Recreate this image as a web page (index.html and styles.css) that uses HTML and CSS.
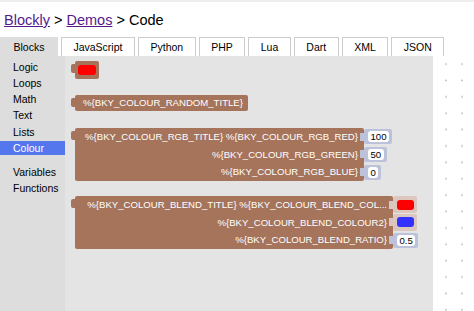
FILE: index.html
```html
<!DOCTYPE html>
<html>
<head>
<meta charset="utf-8">
<link rel="stylesheet" href="styles.css">
</head>
<body>
<div class="topstrip"></div>
<h1 class="title"><a href="#">Blockly</a> &gt; <a href="#">Demos</a> &gt; Code</h1>
<div class="tabs">
  <div class="tab sel">Blocks</div>
  <div class="tab">JavaScript</div>
  <div class="tab">Python</div>
  <div class="tab">PHP</div>
  <div class="tab">Lua</div>
  <div class="tab">Dart</div>
  <div class="tab">XML</div>
  <div class="tab">JSON</div>
</div>
<div class="ws">
  <div class="toolbox">
    <div class="cat">Logic</div>
    <div class="cat">Loops</div>
    <div class="cat">Math</div>
    <div class="cat">Text</div>
    <div class="cat">Lists</div>
    <div class="cat sel">Colour</div>
    <div class="sep"></div>
    <div class="cat">Variables</div>
    <div class="cat">Functions</div>
  </div>
  <div class="flyout">
    <div class="blk b-picker">
      <span class="otab"></span>
      <div class="body"><span class="swatch red"></span></div>
    </div>
    <div class="blk b-random">
      <span class="otab"></span>
      <div class="body"><span class="lbl">%{BKY_COLOUR_RANDOM_TITLE}</span></div>
    </div>
    <div class="blk b-rgb">
      <span class="otab"></span>
      <div class="body labels">
        <div class="lrow">%{BKY_COLOUR_RGB_TITLE} %{BKY_COLOUR_RGB_RED}</div>
        <div class="lrow">%{BKY_COLOUR_RGB_GREEN}</div>
        <div class="lrow">%{BKY_COLOUR_RGB_BLUE}</div>
      </div>
      <div class="inputs">
        <div class="irow"><span class="itab num"></span><div class="sbody num"><span class="fld">100</span></div></div>
        <div class="irow"><span class="itab num"></span><div class="sbody num"><span class="fld">50</span></div></div>
        <div class="irow"><span class="itab num"></span><div class="sbody num"><span class="fld">0</span></div></div>
      </div>
    </div>
    <div class="blk b-blend">
      <span class="otab"></span>
      <div class="body labels">
        <div class="lrow">%{BKY_COLOUR_BLEND_TITLE} %{BKY_COLOUR_BLEND_COL...</div>
        <div class="lrow">%{BKY_COLOUR_BLEND_COLOUR2}</div>
        <div class="lrow">%{BKY_COLOUR_BLEND_RATIO}</div>
      </div>
      <div class="inputs">
        <div class="irow"><span class="itab col"></span><div class="sbody col"><span class="swatch red"></span></div></div>
        <div class="irow"><span class="itab col"></span><div class="sbody col"><span class="swatch blue"></span></div></div>
        <div class="irow"><span class="itab num"></span><div class="sbody num"><span class="fld">0.5</span></div></div>
      </div>
    </div>
  </div>
  <div class="canvas"></div>
</div>
</body>
</html>
```
FILE: styles.css
```css
html, body {
  height: 100%;
}
body {
  margin: 0;
  background: #fff;
  font-family: "Liberation Sans", Arial, sans-serif;
  color: #000;
  display: flex;
  flex-direction: column;
  overflow: hidden;
}
.topstrip {
  height: 2px;
  background: #eeeeee;
  flex: none;
}
.title {
  margin: 9px 0 0 4px;
  font-size: 14.5px;
  line-height: 18px;
  font-weight: normal;
  flex: none;
}
.title a {
  color: #551a8b;
}
.tabs {
  display: flex;
  gap: 3px;
  margin-top: 8px;
  flex: none;
}
.tab {
  box-sizing: border-box;
  height: 19px;
  line-height: 18px;
  padding: 0 11.5px;
  border: 1px solid #cccccc;
  border-bottom: none;
  font-size: 10.5px;
  background: #fff;
}
.tab.sel {
  background: #dddddd;
  border-color: #dddddd;
  padding: 0 12.5px;
}
.ws {
  flex: 1;
  display: flex;
  min-height: 0;
}
.toolbox {
  width: 65px;
  flex: none;
  background: #dddddd;
  display: flex;
  flex-direction: column;
  gap: 2px;
  padding-top: 3.5px;
  box-sizing: border-box;
}
.cat {
  height: 14.3px;
  line-height: 14.3px;
  padding-left: 13px;
  font-size: 10.5px;
  color: #000;
}
.cat.sel {
  background: #5577ee;
  color: #fff;
}
.sep {
  height: 5.7px;
}
.flyout {
  width: 368px;
  flex: none;
  background: #e4e4e4;
  display: flex;
  flex-direction: column;
  align-items: flex-start;
}
.canvas {
  flex: 1;
  background-color: #fff;
  background-image: radial-gradient(circle, #c4c4c4 0.8px, transparent 1.2px);
  background-size: 16px 16.4px;
  background-position: 5px -0.2px;
}
.blk {
  display: flex;
  align-items: flex-start;
  margin-left: 6px;
}
.otab {
  width: 4px;
  height: 9px;
  margin-top: 3px;
  background: #a5745b;
  border-radius: 2px 0 0 2px;
  flex: none;
}
.body {
  background: #a5745b;
  border-radius: 2px;
  color: #fff;
  font-size: 9.6px;
}
.b-picker {
  margin-top: 5px;
}
.b-picker .body {
  padding: 4px 3px;
  display: flex;
}
.b-random {
  margin-top: 16px;
}
.b-random .body {
  height: 16px;
  line-height: 16px;
  padding: 0 5px 0 8px;
}
.b-rgb {
  margin-top: 17px;
}
.b-blend {
  margin-top: 15px;
}
.labels {
  display: flex;
  flex-direction: column;
  align-items: flex-end;
  box-sizing: border-box;
  padding: 0 6px 0 8px;
  white-space: nowrap;
}
.b-rgb .labels {
  width: 289px;
}
.b-blend .labels {
  width: 318px;
}
.lrow {
  height: 17.67px;
  line-height: 17.67px;
}
.inputs {
  display: flex;
  flex-direction: column;
  margin-left: -4px;
}
.irow {
  height: 17.67px;
  display: flex;
  align-items: center;
}
.itab {
  width: 4px;
  height: 8px;
  flex: none;
}
.itab.num, .sbody.num {
  background: #bdc2db;
}
.itab.col, .sbody.col {
  background: #dbc7bd;
}
.sbody {
  display: flex;
  align-items: center;
  border-radius: 2px;
  padding: 0 3px 0 4px;
}
.sbody.num {
  height: 15px;
}
.sbody.col {
  height: 17px;
}
.fld {
  background: #fff;
  border-radius: 3px;
  height: 11px;
  line-height: 11px;
  padding: 0 2.5px;
  font-size: 9.6px;
  color: #000;
}
.swatch {
  display: block;
  width: 17px;
  height: 10px;
  border-radius: 3px;
}
.b-picker .swatch {
  width: 18px;
}
.swatch.red {
  background: #ff0000;
}
.swatch.blue {
  background: #3333ff;
}
```
